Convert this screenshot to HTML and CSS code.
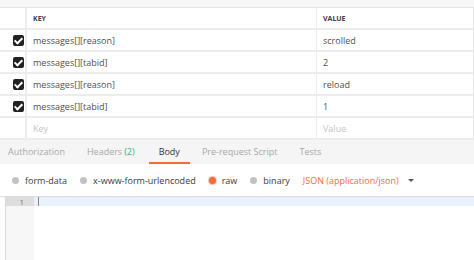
FILE: index.html
```html
<!DOCTYPE html>
<html lang="en">
<head>
    <meta charset="UTF-8">
    <title>Body params</title>
    <link rel="stylesheet" href="styles.css">
</head>
<body>
    <div class="top-strip"></div>

    <!-- key / value table -->
    <div class="params">
        <div class="row head">
            <div class="cell check"></div>
            <div class="cell key">KEY</div>
            <div class="cell value">VALUE</div>
        </div>
        <div class="row">
            <div class="cell check"><span class="box"></span></div>
            <div class="cell key">messages[][reason]</div>
            <div class="cell value">scrolled</div>
        </div>
        <div class="row">
            <div class="cell check"><span class="box"></span></div>
            <div class="cell key">messages[][tabid]</div>
            <div class="cell value">2</div>
        </div>
        <div class="row">
            <div class="cell check"><span class="box"></span></div>
            <div class="cell key">messages[][reason]</div>
            <div class="cell value">reload</div>
        </div>
        <div class="row">
            <div class="cell check"><span class="box"></span></div>
            <div class="cell key">messages[][tabid]</div>
            <div class="cell value">1</div>
        </div>
        <div class="row empty">
            <div class="cell check"></div>
            <div class="cell key">Key</div>
            <div class="cell value">Value</div>
        </div>
    </div>

    <!-- request tabs -->
    <div class="tabs">
        <span class="tab">Authorization</span>
        <span class="tab">Headers <em>(2)</em></span>
        <span class="tab active">Body</span>
        <span class="tab">Pre-request Script</span>
        <span class="tab">Tests</span>
    </div>

    <!-- body type -->
    <div class="modes">
        <label class="mode"><span class="dot"></span>form-data</label>
        <label class="mode"><span class="dot"></span>x-www-form-urlencoded</label>
        <label class="mode on"><span class="dot"></span>raw</label>
        <label class="mode"><span class="dot"></span>binary</label>
        <span class="type">JSON (application/json)</span>
        <span class="caret"></span>
    </div>

    <!-- editor -->
    <div class="editor">
        <div class="gutter">
            <div class="num">1</div>
        </div>
        <div class="lines">
            <div class="line current"><span class="cursor"></span></div>
        </div>
    </div>
</body>
</html>
```

FILE: styles.css
```css
* {
    margin: 0;
    padding: 0;
    box-sizing: border-box;
}

body {
    font-family: 'Open Sans', 'Liberation Sans', sans-serif;
    font-size: 9px;
    color: #505050;
    background: white;
    width: 474px;
    height: 260px;
    overflow: hidden;
}

.top-strip {
    height: 8px;
    background: #f7f7f7;
    border-bottom: 1px solid #e6e6e6;
}

/* table */
.params {
    border-right: 1px solid #e6e6e6;
}

.row {
    display: grid;
    grid-template-columns: 27px 289px 1fr;
    height: 22px;
    border-bottom: 2px solid #ececec;
}

.cell {
    display: flex;
    align-items: center;
    padding-left: 6px;
}

.check {
    padding-left: 13px;
    border-right: 2px solid #ececec;
}

.value {
    border-left: 1px solid #ececec;
    padding-left: 6px;
}

.head .cell {
    font-size: 7px;
    font-weight: bold;
    color: #404040;
}

.empty .cell {
    color: #c4c4c4;
}

.box {
    width: 11px;
    height: 11px;
    border-radius: 2px;
    background: #222;
    position: relative;
}

.box::after {
    content: "";
    position: absolute;
    left: 3px;
    top: 1px;
    width: 3px;
    height: 6px;
    border: solid white;
    border-width: 0 2px 2px 0;
    transform: rotate(45deg);
}

/* tabs */
.tabs {
    display: flex;
    height: 24px;
    background: #f5f5f5;
    padding-left: 8px;
}

.tab {
    display: flex;
    align-items: center;
    color: #a8a8a8;
    margin-right: 22px;
    border-bottom: 2px solid transparent;
}

.tab em {
    font-style: normal;
    color: #3fb07d;
    margin-left: 2px;
}

.tab.active {
    color: #333;
    border-bottom-color: #f26b3a;
    padding: 0 10px;
    margin-left: -8px;
    margin-right: 12px;
}

/* body modes */
.modes {
    display: flex;
    align-items: center;
    height: 33px;
    padding-left: 12px;
    border-bottom: 1px solid #dcdcdc;
    color: #3a3a3a;
}

.mode {
    display: flex;
    align-items: center;
    margin-right: 13px;
}

.dot {
    width: 7px;
    height: 7px;
    border-radius: 50%;
    background: #c2c2c2;
    margin-right: 6px;
}

.mode.on .dot {
    background: #f26b3a;
    box-shadow: 0 0 0 1px #f8c3af;
}

.type {
    color: #f26b3a;
}

.caret {
    width: 0;
    height: 0;
    border-left: 3px solid transparent;
    border-right: 3px solid transparent;
    border-top: 3px solid #555;
    margin-left: 9px;
}

/* editor */
.editor {
    display: flex;
    height: 63px;
}

.gutter {
    width: 29px;
    margin-left: 5px;
    border-left: 1px solid #d8d8d8;
    background: #f7f7f7;
}

.num {
    height: 9px;
    background: #dedede;
    text-align: right;
    padding-right: 10px;
    font-size: 8px;
    line-height: 9px;
    color: #777;
}

.lines {
    flex: 1;
}

.line {
    height: 9px;
}

.line.current {
    background: #e8f1fc;
}

.cursor {
    display: block;
    width: 1px;
    height: 9px;
    background: #888;
    margin-left: 4px;
}
```
